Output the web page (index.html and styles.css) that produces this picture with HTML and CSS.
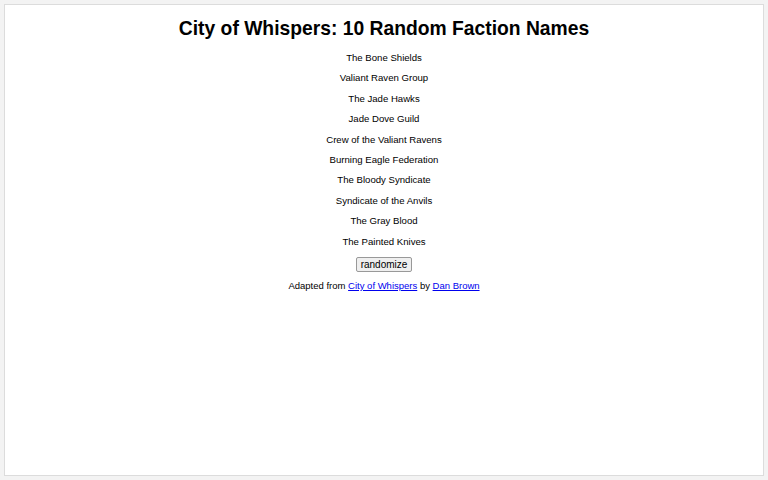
FILE: index.html
```html
<!DOCTYPE html>
<html lang="en">
<head>
  <meta charset="UTF-8">
  <meta name="viewport" content="width=device-width, initial-scale=1.0">
  <title>City of Whispers: 10 Random Faction Names</title>
  <link rel="stylesheet" href="styles.css">
</head>
<body>
  <div class="page">
    <h1>City of Whispers: 10 Random Faction Names</h1>

    <ul id="names" class="names">
      <li>The Bone Shields</li>
      <li>Valiant Raven Group</li>
      <li>The Jade Hawks</li>
      <li>Jade Dove Guild</li>
      <li>Crew of the Valiant Ravens</li>
      <li>Burning Eagle Federation</li>
      <li>The Bloody Syndicate</li>
      <li>Syndicate of the Anvils</li>
      <li>The Gray Blood</li>
      <li>The Painted Knives</li>
    </ul>

    <button type="button" id="randomize" class="btn">randomize</button>

    <p class="credit">Adapted from <a href="#">City of Whispers</a> by <a href="#">Dan Brown</a></p>
  </div>
</body>
</html>
```

FILE: styles.css
```css
html, body {
  height: 100%;
}

body {
  margin: 0;
  padding: 4px;
  box-sizing: border-box;
  background-color: #f3f3f3;
  font-family: "Liberation Sans", Arial, sans-serif;
  color: #000;
}

.page {
  height: 100%;
  box-sizing: border-box;
  background-color: #fff;
  border: 1px solid #dcdcdc;
  text-align: center;
  padding-top: 14px;
}

h1 {
  font-size: 19.3px;
  margin: 0 0 9px;
  line-height: 20px;
}

.names {
  list-style: none;
  margin: 0;
  padding: 0;
  font-size: 9.6px;
}

.names li {
  line-height: 20.4px;
}

.btn {
  margin-top: 5px;
  font-family: inherit;
  font-size: 10px;
  padding: 1px 4px;
  border: 1px solid #999;
  border-radius: 2px;
  background-color: #efefef;
  color: #000;
}

.credit {
  font-size: 9.5px;
  margin: 8px 0 0;
}

.credit a {
  color: #0000ee;
}
```
